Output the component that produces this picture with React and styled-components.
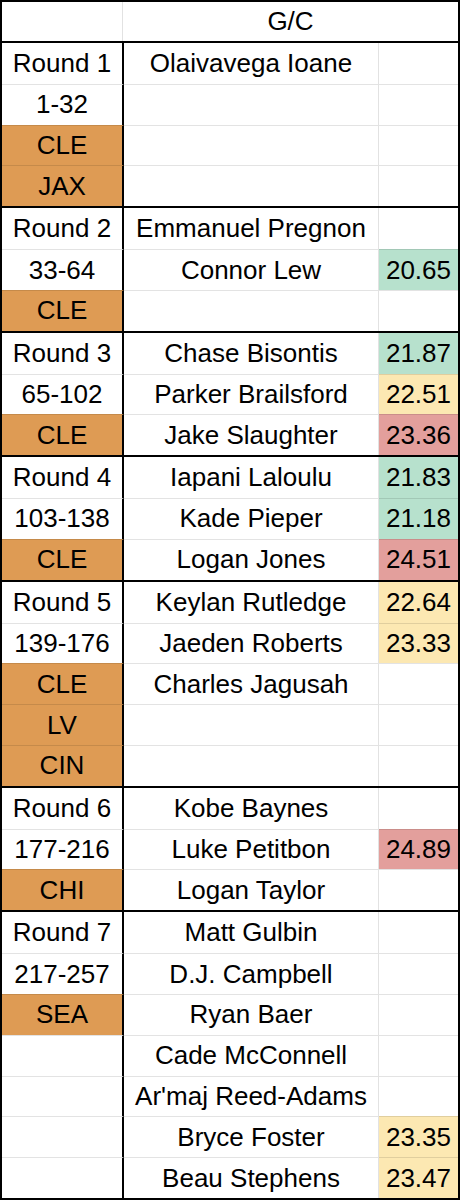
import React from "react";
import styled, { createGlobalStyle } from "styled-components";

const GlobalStyle = createGlobalStyle`
  html, body {
    margin: 0;
    padding: 0;
    background: #fff;
  }
  * {
    box-sizing: border-box;
  }
`;

const tones = {
  team: "#de9b54",
  good: "#b7e1cd",
  mid: "#fce8b2",
  bad: "#e39f9c",
};

// [pick, name, time, tone of time, team cell]
const rounds = [
  [
    ["Round 1", "Olaivavega Ioane"],
    ["1-32"],
    ["CLE", "", "", null, true],
    ["JAX", "", "", null, true],
  ],
  [
    ["Round 2", "Emmanuel Pregnon"],
    ["33-64", "Connor Lew", "20.65", "good"],
    ["CLE", "", "", null, true],
  ],
  [
    ["Round 3", "Chase Bisontis", "21.87", "good"],
    ["65-102", "Parker Brailsford", "22.51", "mid"],
    ["CLE", "Jake Slaughter", "23.36", "bad", true],
  ],
  [
    ["Round 4", "Iapani Laloulu", "21.83", "good"],
    ["103-138", "Kade Pieper", "21.18", "good"],
    ["CLE", "Logan Jones", "24.51", "bad", true],
  ],
  [
    ["Round 5", "Keylan Rutledge", "22.64", "mid"],
    ["139-176", "Jaeden Roberts", "23.33", "mid"],
    ["CLE", "Charles Jagusah", "", null, true],
    ["LV", "", "", null, true],
    ["CIN", "", "", null, true],
  ],
  [
    ["Round 6", "Kobe Baynes"],
    ["177-216", "Luke Petitbon", "24.89", "bad"],
    ["CHI", "Logan Taylor", "", null, true],
  ],
  [
    ["Round 7", "Matt Gulbin"],
    ["217-257", "D.J. Campbell"],
    ["SEA", "Ryan Baer", "", null, true],
    ["", "Cade McConnell"],
    ["", "Ar'maj Reed-Adams"],
    ["", "Bryce Foster", "23.35", "mid"],
    ["", "Beau Stephens", "23.47", "mid"],
  ],
];

const App = () => {
  return (
    <>
      <GlobalStyle />
      <Sheet>
        <Header>
          <HeadBlank />
          <HeadTitle>G/C</HeadTitle>
        </Header>
        <Body>
          {rounds.map((rows, gi) => (
            <Group key={gi} $rows={rows.length} $first={gi === 0}>
              {rows.map(([pick, name, time, tone, team], ri) => (
                <Row key={ri}>
                  <PickCell $team={team} $top={ri > 0}>
                    {pick}
                  </PickCell>
                  <NameCell $top={ri > 0}>{name}</NameCell>
                  <TimeCell $tone={tone} $top={ri > 0}>
                    {time}
                  </TimeCell>
                </Row>
              ))}
            </Group>
          ))}
        </Body>
      </Sheet>
    </>
  );
};

const Sheet = styled.div`
  width: 460px;
  height: 1200px;
  border: 2px solid #000;
  display: flex;
  flex-direction: column;
  font-family: "Liberation Sans", Arial, sans-serif;
  font-size: 26px;
  color: #000;
  background: #fff;
`;

const Header = styled.div`
  height: 41px;
  flex: none;
  display: grid;
  grid-template-columns: 121px 1fr;
  border-bottom: 2px solid #000;
`;

const HeadBlank = styled.div`
  border-right: 1px solid #e2e2e2;
`;

const HeadTitle = styled.div`
  display: flex;
  align-items: center;
  justify-content: center;
`;

const Body = styled.div`
  flex: 1;
  display: flex;
  flex-direction: column;
`;

const Group = styled.div`
  flex: ${({ $rows }) => $rows} 1 0;
  display: flex;
  flex-direction: column;
  border-top: ${({ $first }) => ($first ? "none" : "2px solid #000")};
`;

const Row = styled.div`
  flex: 1 1 0;
  display: grid;
  grid-template-columns: 122px 255px 1fr;
`;

const Cell = styled.div`
  display: flex;
  align-items: center;
  justify-content: center;
  white-space: nowrap;
  border-top: ${({ $top }) => ($top ? "1px solid rgba(0, 0, 0, 0.11)" : "none")};
`;

const PickCell = styled(Cell)`
  background: ${({ $team }) => ($team ? tones.team : "#fff")};
  border-right: 2px solid #000;
`;

const NameCell = styled(Cell)`
  border-right: 1px solid #e2e2e2;
`;

const TimeCell = styled(Cell)`
  background: ${({ $tone }) => ($tone ? tones[$tone] : "#fff")};
`;

export default App;
